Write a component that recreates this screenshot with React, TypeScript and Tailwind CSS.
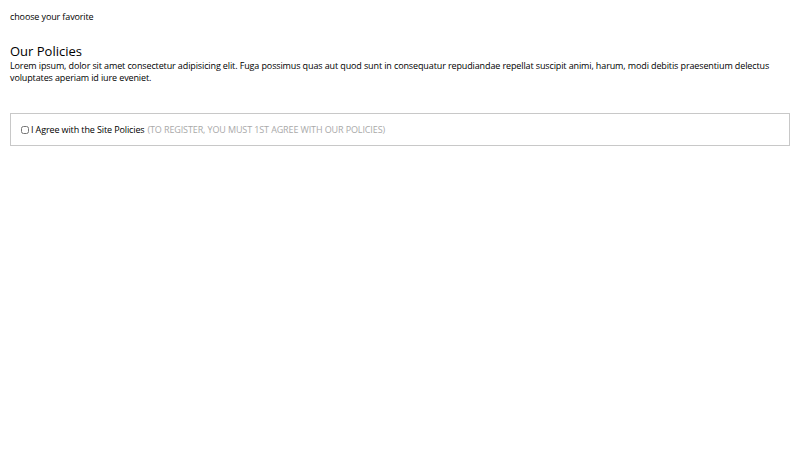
export default function App() {
  return (
    <div className="min-h-[450px] bg-white px-[10px] pt-[11px] text-black tracking-[-0.12px]" style={{ fontFamily: '"Open Sans", sans-serif' }}>
      <p className="text-[9px] leading-[12px]">choose your favorite</p>
      <h2 className="mt-[19px] text-[13px] font-medium leading-[18px] tracking-normal">Our Policies</h2>
      <p className="text-[9px] leading-[12px]">
        Lorem ipsum, dolor sit amet consectetur adipisicing elit. Fuga possimus quas aut quod sunt in consequatur repudiandae repellat suscipit animi, harum, modi debitis praesentium delectus voluptates aperiam id iure eveniet.
      </p>
      <div className="mt-[29px] flex h-[33px] items-center border border-[#c8c8c8] px-[10px]">
        <label className="flex items-center text-[9px] leading-[12px]">
          <input type="checkbox" className="m-0 mr-[2px] h-[8px] w-[8px]" />
          <span>I Agree with the Site Policies</span>
          <span className="ml-[3px] text-[#a9a9a9]">(TO REGISTER, YOU MUST 1ST AGREE WITH OUR POLICIES)</span>
        </label>
      </div>
    </div>
  );
}
